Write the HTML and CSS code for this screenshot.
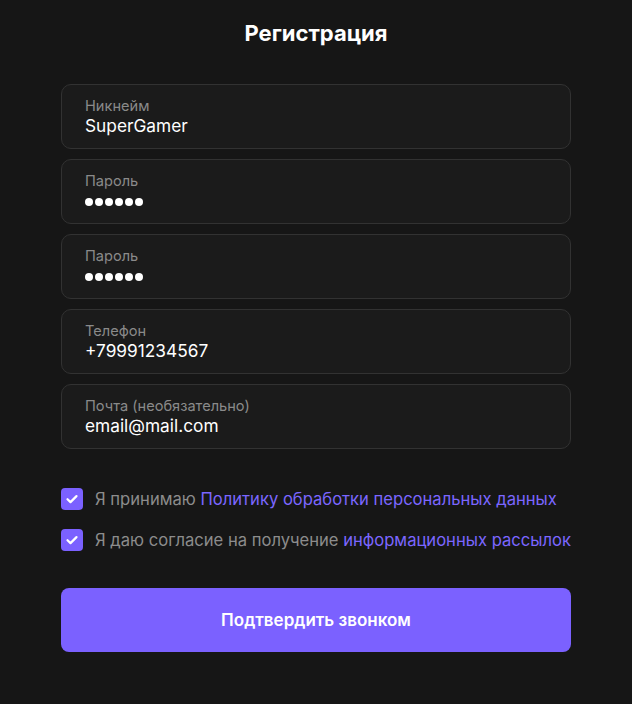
FILE: index.html
```html
<!DOCTYPE html>
<html lang="ru">
<head>
<meta charset="utf-8">
<title>Регистрация</title>
<link rel="stylesheet" href="styles.css">
</head>
<body>
<main class="page">
  <h1 class="title">Регистрация</h1>
  <form class="form">
    <div class="fields">
      <label class="field"><span class="field-label">Никнейм</span><span class="field-value">SuperGamer</span></label>
      <label class="field"><span class="field-label">Пароль</span><span class="field-value dots"><i></i><i></i><i></i><i></i><i></i><i></i></span></label>
      <label class="field"><span class="field-label">Пароль</span><span class="field-value dots"><i></i><i></i><i></i><i></i><i></i><i></i></span></label>
      <label class="field"><span class="field-label">Телефон</span><span class="field-value">+79991234567</span></label>
      <label class="field"><span class="field-label">Почта (необязательно)</span><span class="field-value">email@mail.com</span></label>
    </div>
    <div class="checks">
      <div class="check">
        <span class="box"><svg viewBox="0 0 22 22" width="22" height="22"><path d="M6.5 11.2l3 2.9 6-6" fill="none" stroke="#fff" stroke-width="2.2" stroke-linecap="round" stroke-linejoin="round"/></svg></span>
        <span class="check-text">Я принимаю <a class="link">Политику обработки персональных данных</a></span>
      </div>
      <div class="check">
        <span class="box"><svg viewBox="0 0 22 22" width="22" height="22"><path d="M6.5 11.2l3 2.9 6-6" fill="none" stroke="#fff" stroke-width="2.2" stroke-linecap="round" stroke-linejoin="round"/></svg></span>
        <span class="check-text">Я даю согласие на получение <a class="link">информационных рассылок</a></span>
      </div>
    </div>
    <button type="button" class="submit">Подтвердить звонком</button>
  </form>
</main>
</body>
</html>
```
FILE: styles.css
```css
* { box-sizing: border-box; }
html, body { margin: 0; padding: 0; }
body {
  background: #161616;
  font-family: Inter, "Noto Sans", sans-serif;
  color: #fff;
  width: 632px;
  height: 704px;
  overflow: hidden;
}
.page {
  padding-top: 19px;
}
.title {
  margin: 0;
  text-align: center;
  font-size: 22px;
  line-height: 28px;
  font-weight: 700;
  color: #fff;
}
.form {
  width: 510px;
  margin: 37px auto 0;
  display: flex;
  flex-direction: column;
}
.fields {
  display: flex;
  flex-direction: column;
  gap: 10px;
}
.field {
  display: flex;
  flex-direction: column;
  height: 65px;
  padding: 12px 23px 0;
  background: #1b1b1b;
  border: 1px solid #323232;
  border-radius: 10px;
}
.field-label {
  font-size: 14.6px;
  line-height: 18px;
  color: #8a8a8a;
}
.field-value {
  font-size: 17.3px;
  line-height: 22px;
  color: #fff;
}
.dots {
  display: flex;
  align-items: center;
  gap: 2px;
  height: 22px;
  padding-top: 1px;
}
.dots i {
  display: block;
  width: 8px;
  height: 8px;
  border-radius: 50%;
  background: #fff;
}
.checks {
  margin-top: 39px;
  display: flex;
  flex-direction: column;
  gap: 19px;
}
.check {
  display: flex;
  align-items: center;
  gap: 12px;
  height: 22px;
}
.box {
  width: 22px;
  height: 22px;
  border-radius: 4px;
  background: #7b61ff;
  display: flex;
  flex-shrink: 0;
}
.check-text {
  font-size: 16.6px;
  color: #8c8c8c;
  white-space: nowrap;
}
.link {
  color: #7b66ff;
}
.submit {
  margin-top: 37px;
  height: 64px;
  border: none;
  border-radius: 8px;
  background: #7b61ff;
  color: #fff;
  font-family: inherit;
  font-size: 17px;
  font-weight: 600;
}
```
